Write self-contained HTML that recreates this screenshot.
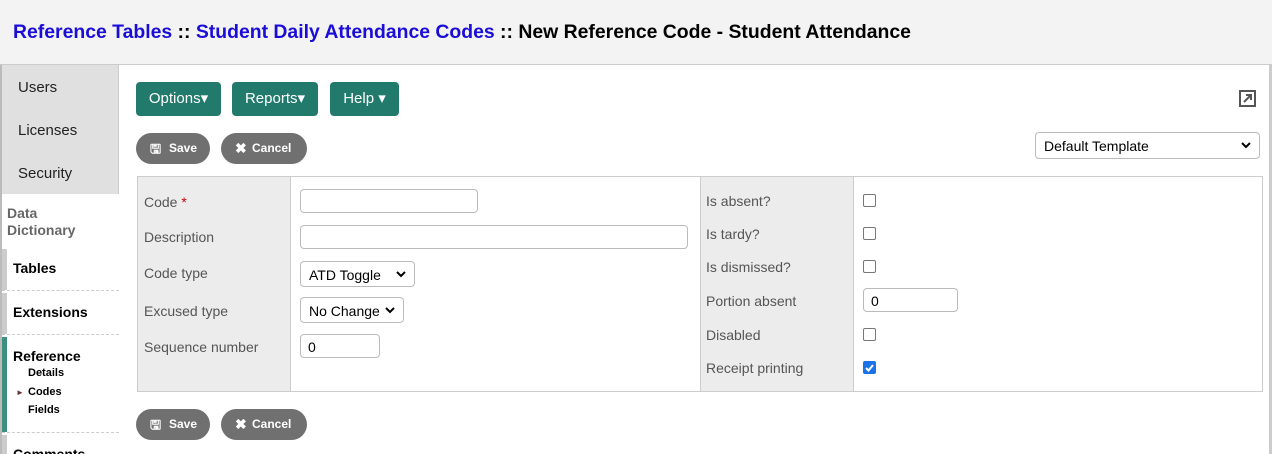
<!DOCTYPE html>
<html><head><style>
*{box-sizing:border-box;margin:0;padding:0}
html,body{width:1272px;height:454px;overflow:hidden}
body{background:#fff;font-family:"Liberation Sans",Arial,sans-serif;font-size:14px;color:#333;position:relative}
.hdr{position:absolute;left:0;top:0;width:1272px;height:65px;background:#f3f3f3;border-bottom:1px solid #ccc}
.hdr h1{position:absolute;left:13px;top:21px;font-size:19.4px;font-weight:bold;color:#000;white-space:nowrap}
.hdr a{color:#1a0dd8;text-decoration:none}
.rb{position:absolute;left:1269px;top:65px;width:3px;height:389px;background:#ccc}
.side{position:absolute;left:0;top:65px;width:119px;height:389px;border-left:2px solid #bbb;overflow:hidden}
.tabs{position:absolute;left:0;top:0;width:117px;height:129px;background:#e0e0e0;border-right:1px solid #ccc}
.tabs div{position:absolute;left:16px;font-size:15px;color:#222}
.dd{position:absolute;left:5px;top:140px;font-size:14px;color:#666;font-weight:bold;line-height:17px}
.it{position:absolute;left:0;width:117px;border-bottom:1px dashed #ccc}
.it .bar{position:absolute;left:0;top:0;bottom:0;width:5px;background:#ccc}
.it b{position:absolute;left:11px;font-size:14px;color:#000}
.sub{position:absolute;left:26px;font-size:11px;font-weight:bold;color:#000}
.btn{position:absolute;height:34px;background:#217a6b;color:#fff;border-radius:4px;font-size:15px;line-height:34px;text-align:center}
.pill{position:absolute;height:31px;background:#707070;color:#fff;border-radius:16px;font-size:12px;font-weight:bold;line-height:31px}
.tbl{position:absolute;left:137px;top:176px;width:1126px;height:216px;border:1px solid #ccc}
.g{position:absolute;top:0;height:214px;background:#ececec;border-right:1px solid #ccc}
.lb{position:absolute;font-size:14px;color:#555;white-space:nowrap}
.in{position:absolute;height:24px;border:1px solid #bbb;border-radius:4px;background:#fff;font-size:14px;color:#000;padding:4px 7px}
.cb{position:absolute;left:162px;width:13px;height:13px;border:1px solid #777;border-radius:2px;background:#fff}
.sel{position:absolute;height:26px;border:1px solid #bbb;border-radius:4px;background:#fff;font-size:14px;color:#000;padding:5px 8px;white-space:nowrap}
.chev{position:absolute;right:8px;top:8px}
</style></head><body>
<div class="hdr"><h1><a>Reference Tables</a> :: <a>Student Daily Attendance Codes</a> :: New Reference Code - Student Attendance</h1></div>
<div class="rb"></div>
<div class="side">
 <div class="tabs"><div style="top:14px">Users</div><div style="top:57px">Licenses</div><div style="top:100px">Security</div></div>
 <div class="dd">Data<br>Dictionary</div>
 <div class="it" style="top:184px;height:42px"><div class="bar"></div><b style="top:11px">Tables</b></div>
 <div class="it" style="top:228px;height:42px"><div class="bar"></div><b style="top:11px">Extensions</b></div>
 <div class="it" style="top:272px;height:96px"><div class="bar" style="background:#3d8f80"></div><b style="top:11px">Reference</b>
  <div class="sub" style="top:30px">Details</div><div class="sub" style="top:49px">Codes</div><div style="position:absolute;left:14px;top:51px;font-size:8px;color:#633">►</div><div class="sub" style="top:67px">Fields</div></div>
 <div class="it" style="top:370px;height:30px;border:0"><div class="bar"></div><b style="top:11px">Comments</b></div>
</div>
<div class="btn" style="left:136px;top:82px;width:85px">Options▾</div>
<div class="btn" style="left:232px;top:82px;width:86px">Reports▾</div>
<div class="btn" style="left:330px;top:82px;width:69px">Help ▾</div>
<svg style="position:absolute;left:1239px;top:90px" width="17" height="17" viewBox="0 0 17 17"><rect x="1" y="1" width="15" height="15" fill="none" stroke="#555" stroke-width="2"/><path d="M5 12L12 5M7 5h5v5" stroke="#555" stroke-width="2" fill="none"/></svg>
<div class="pill" style="left:136px;top:133px;width:74px"><span style="position:absolute;left:14px;font-size:13px">🖫</span><span style="position:absolute;left:33px">Save</span></div>
<div class="pill" style="left:221px;top:133px;width:86px"><span style="position:absolute;left:14px;font-size:14px">✖</span><span style="position:absolute;left:31px">Cancel</span></div>
<div class="sel" style="left:1035px;top:132px;width:225px;height:27px">Default Template<svg class="chev" width="10" height="8" viewBox="0 0 10 8"><path d="M1 2l4 4 4-4" stroke="#000" stroke-width="2" fill="none"/></svg></div>
<div class="tbl">
 <div class="g" style="left:0;width:153px"></div>
 <div class="g" style="left:562px;width:154px;border-left:1px solid #ccc"></div>
 <div class="lb" style="left:6px;top:17px">Code <span style="color:#c00">*</span></div>
 <div class="lb" style="left:6px;top:52px">Description</div>
 <div class="lb" style="left:6px;top:88px">Code type</div>
 <div class="lb" style="left:6px;top:126px">Excused type</div>
 <div class="lb" style="left:6px;top:162px">Sequence number</div>
 <div class="in" style="left:162px;top:12px;width:178px"></div>
 <div class="in" style="left:162px;top:48px;width:388px"></div>
 <div class="sel" style="left:162px;top:84px;width:115px">ATD Toggle<svg class="chev" width="10" height="8" viewBox="0 0 10 8"><path d="M1 2l4 4 4-4" stroke="#000" stroke-width="2" fill="none"/></svg></div>
 <div class="sel" style="left:162px;top:120px;width:104px">No Change<svg class="chev" width="10" height="8" viewBox="0 0 10 8"><path d="M1 2l4 4 4-4" stroke="#000" stroke-width="2" fill="none"/></svg></div>
 <div class="in" style="left:162px;top:157px;width:80px">0</div>
 <div style="position:absolute;left:563px;top:0">
  <div class="lb" style="left:5px;top:16px">Is absent?</div>
  <div class="lb" style="left:5px;top:49px">Is tardy?</div>
  <div class="lb" style="left:5px;top:82px">Is dismissed?</div>
  <div class="lb" style="left:5px;top:116px">Portion absent</div>
  <div class="lb" style="left:5px;top:150px">Disabled</div>
  <div class="lb" style="left:5px;top:183px">Receipt printing</div>
  <div class="cb" style="top:17px"></div><div class="cb" style="top:50px"></div><div class="cb" style="top:83px"></div>
  <div class="in" style="left:162px;top:111px;width:95px">0</div>
  <div class="cb" style="top:151px"></div>
  <div class="cb" style="top:184px;background:#1a73e8;border-color:#1a73e8"><svg width="11" height="11" viewBox="0 0 11 11" style="position:absolute;left:0;top:0"><path d="M2 6l2.5 2.5L9 3" stroke="#fff" stroke-width="2" fill="none"/></svg></div>
 </div>
</div>
<div class="pill" style="left:136px;top:409px;width:74px"><span style="position:absolute;left:14px;font-size:13px">🖫</span><span style="position:absolute;left:33px">Save</span></div>
<div class="pill" style="left:221px;top:409px;width:86px"><span style="position:absolute;left:14px;font-size:14px">✖</span><span style="position:absolute;left:31px">Cancel</span></div>
</body></html>
